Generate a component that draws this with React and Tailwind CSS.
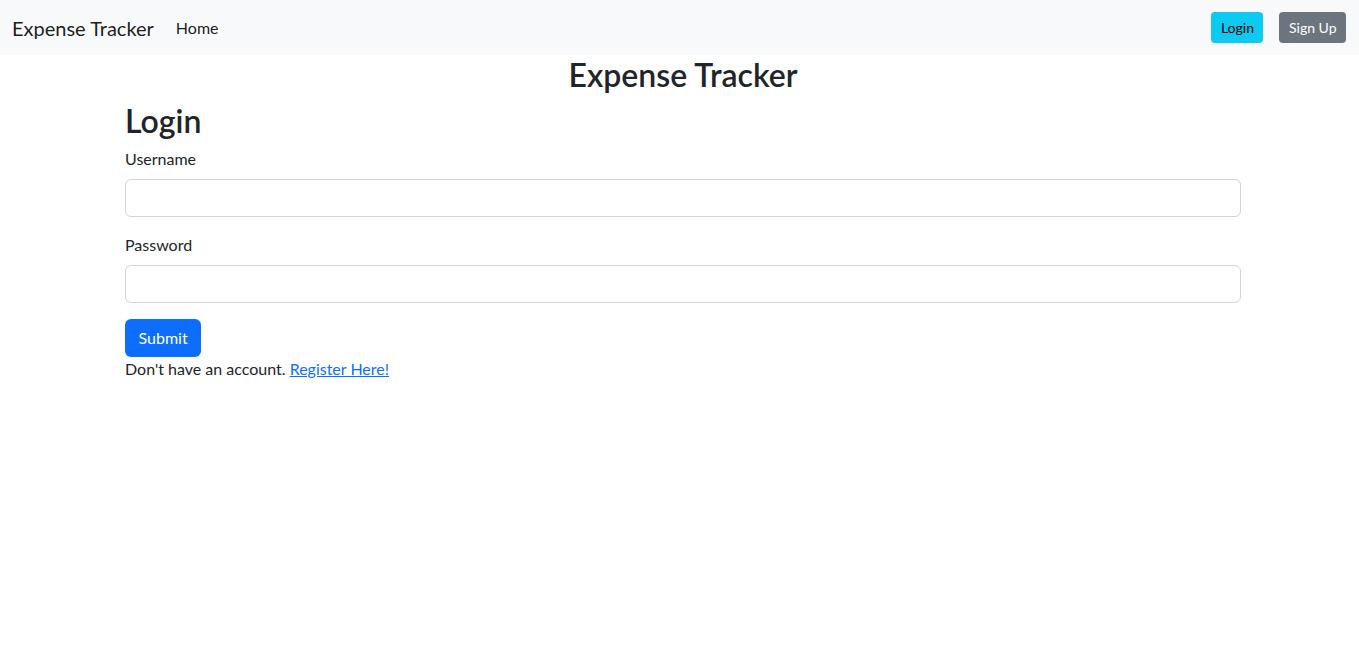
import React from 'react'

export default function App() {
  return (
    <div className="min-h-[652px] bg-white text-[#212529] font-['Lato',sans-serif]">
      {/* navbar */}
      <nav className="flex h-[55px] items-center justify-between bg-[#f8f9fa] px-3">
        <div className="flex items-center">
          <a href="#" className="mr-[14px] text-[20px] leading-[30px] text-black/90">Expense Tracker</a>
          <a href="#" className="px-2 text-[16px] leading-6 text-black/90">Home</a>
        </div>
        <div className="flex items-center gap-4 pr-[1px]">
          <button className="rounded-[4px] bg-[#0dcaf0] px-[9.5px] py-1 text-[14px] leading-[23px] text-black">Login</button>
          <button className="rounded-[4px] bg-[#6c757d] px-[9.5px] py-1 text-[14px] leading-[23px] text-white">Sign Up</button>
        </div>
      </nav>

      <div className="ml-[113px] w-[1140px] px-3">
        <h2 className="mb-2 pt-[1px] text-center text-[32px] font-semibold leading-[38px]">Expense Tracker</h2>
        <h2 className="mb-2 text-[32px] font-semibold leading-[37px]">Login</h2>

        <form onSubmit={(e) => e.preventDefault()}>
          <div className="mb-4">
            <label className="mb-2 block text-[16px] leading-6">Username</label>
            <input type="text" className="block h-[38px] w-full rounded-[6px] border border-[#ced4da] px-3 outline-none" />
          </div>
          <div className="mb-4">
            <label className="mb-2 block text-[16px] leading-6">Password</label>
            <input type="password" className="block h-[38px] w-full rounded-[6px] border border-[#ced4da] px-3 outline-none" />
          </div>
          <button type="submit" className="h-[38px] rounded-[6px] bg-[#0d6efd] px-[13.5px] text-[16px] leading-6 text-white">Submit</button>
        </form>
        <p className="text-[16px] leading-6">
          Don't have an account. <a href="#" className="text-[#0d6efd] underline">Register Here!</a>
        </p>
      </div>
    </div>
  )
}
